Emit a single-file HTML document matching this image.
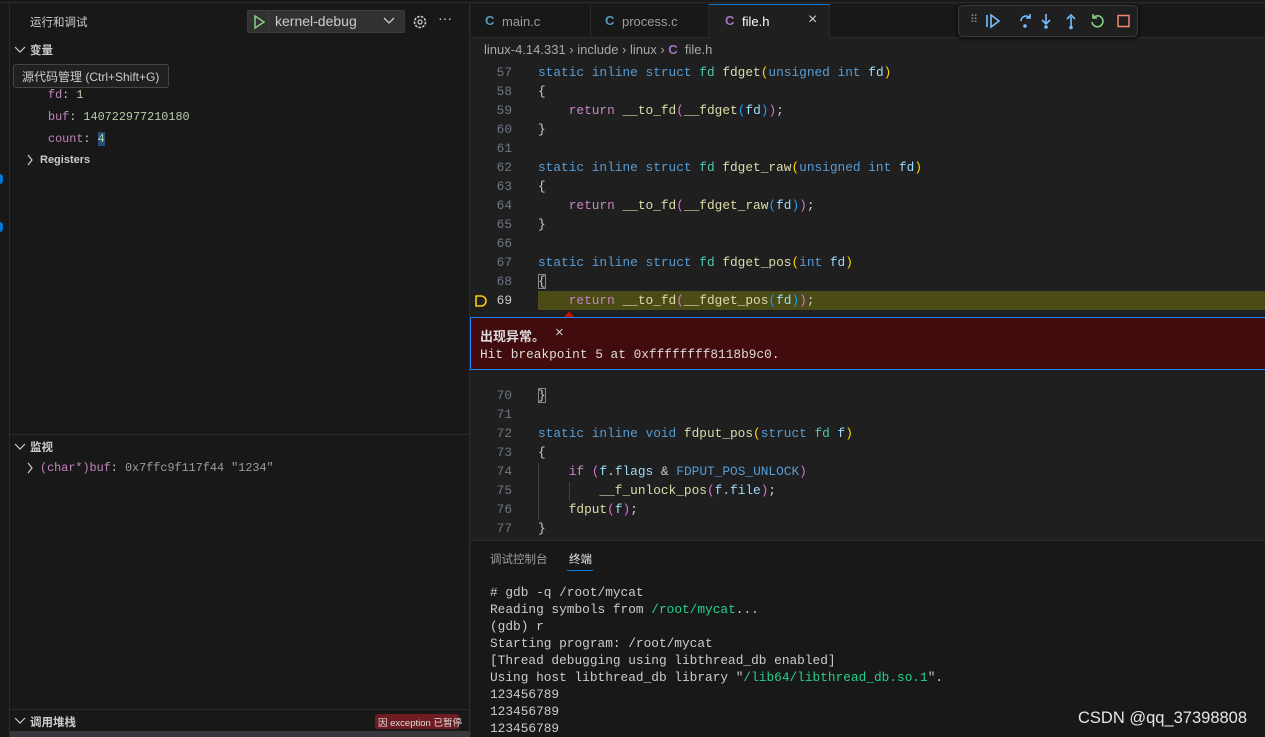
<!DOCTYPE html>
<html><head><meta charset="utf-8"><style>
*{margin:0;padding:0;box-sizing:border-box}
body{width:1265px;height:737px;background:#1f1f1f;overflow:hidden;position:relative;font-family:"Liberation Sans","Noto Sans CJK SC",sans-serif;color:#ccc;font-size:13px}
.a{position:absolute;white-space:pre}
.m{font-family:"Liberation Mono","Noto Sans CJK SC",monospace;font-size:12.8px}
.k{color:#569cd6}.t{color:#4ec9b0}.f{color:#dcdcaa}.r{color:#c586c0}.p{color:#9cdcfe}.y{color:#ffd700}.pk{color:#da70d6}.b{color:#179fff}.w{color:#cccccc}.n{color:#6e7681}
.ln{position:absolute;left:470px;width:42px;text-align:right;color:#6e7681}
.cd{position:absolute;left:538px;color:#ccc}
</style></head><body>
<div class="a" style="left:0;top:0;width:10px;height:737px;background:#181818;border-right:1px solid #2b2b2b"></div>
<div class="a" style="left:-3px;top:174px;width:6px;height:10px;background:#0078d4;border-radius:3px"></div>
<div class="a" style="left:-3px;top:222px;width:6px;height:10px;background:#0078d4;border-radius:3px"></div>
<div class="a" style="left:10px;top:0;width:460px;height:737px;background:#181818;border-right:1px solid #2b2b2b"></div>
<div class="a" style="left:0;top:0;width:1265px;height:3px;background:#181818;border-bottom:1px solid #2b2b2b"></div>
<div class="a" style="left:30px;top:14px;font-size:11.5px;color:#ccc">运行和调试</div>
<div class="a" style="left:247px;top:10px;width:158px;height:23px;background:#313131;border:1px solid #3c3c3c;border-radius:2px"></div>
<div class="a" style="left:268px;top:10px;width:1px;height:23px;background:#3c3c3c"></div>
<svg class="a" style="left:252px;top:14px" width="14" height="16"><path d="M3 2 L12 8 L3 14 Z" fill="none" stroke="#89d185" stroke-width="1.5"/></svg>
<div class="a" style="left:275px;top:13px;font-size:14px;color:#ccc">kernel-debug</div>
<svg class="a" style="left:383px;top:16px" width="12" height="10"><path d="M1 2 L6 7 L11 2" fill="none" stroke="#ccc" stroke-width="1.3"/></svg>
<svg class="a" style="left:412px;top:14px" width="16" height="16"><circle cx="8" cy="8" r="5.5" fill="none" stroke="#ccc" stroke-width="1.6" stroke-dasharray="2.5 1.3"/><circle cx="8" cy="8" r="2" fill="none" stroke="#ccc" stroke-width="1.2"/></svg>
<div class="a" style="left:438px;top:10px;font-size:14px;color:#ccc">···</div>
<svg class="a" style="left:14px;top:45px" width="12" height="10"><path d="M1 2 L6 7 L11 2" fill="none" stroke="#ccc" stroke-width="1.2"/></svg>
<div class="a" style="left:30px;top:42px;font-size:11.5px;font-weight:bold;color:#ccc">变量</div>
<div class="a" style="left:13px;top:64px;width:156px;height:24px;background:#202020;border:1px solid #454545;border-radius:3px;font-size:12px;color:#ccc;padding:3px 8px">源代码管理 (Ctrl+Shift+G)</div>
<div class="a m" style="left:48px;top:88px;font-size:11.8px"><span style="color:#c586c0">fd</span><span class="w">: </span><span style="color:#b5cea8">1</span></div>
<div class="a m" style="left:48px;top:110px;font-size:11.8px"><span style="color:#c586c0">buf</span><span class="w">: </span><span style="color:#b5cea8">140722977210180</span></div>
<div class="a m" style="left:48px;top:132px;font-size:11.8px"><span style="color:#c586c0">count</span><span class="w">: </span><span style="color:#b5cea8;background:#264f78">4</span></div>
<svg class="a" style="left:26px;top:154px" width="8" height="12"><path d="M2 1 L6 6 L2 11" fill="none" stroke="#ccc" stroke-width="1.2"/></svg>
<div class="a" style="left:40px;top:154px;font-size:11px;font-weight:bold;color:#ccc">Registers</div>
<div class="a" style="left:10px;top:434px;width:460px;height:1px;background:#2b2b2b"></div>
<svg class="a" style="left:14px;top:442px" width="12" height="10"><path d="M1 2 L6 7 L11 2" fill="none" stroke="#ccc" stroke-width="1.2"/></svg>
<div class="a" style="left:30px;top:439px;font-size:11.5px;font-weight:bold;color:#ccc">监视</div>
<svg class="a" style="left:26px;top:462px" width="8" height="12"><path d="M2 1 L6 6 L2 11" fill="none" stroke="#ccc" stroke-width="1.2"/></svg>
<div class="a m" style="left:40px;top:461px;font-size:11.8px"><span style="color:#c586c0">(char*)buf</span><span class="w">: </span><span style="color:#9d9d9d">0x7ffc9f117f44 "1234"</span></div>
<div class="a" style="left:10px;top:709px;width:460px;height:1px;background:#2b2b2b"></div>
<svg class="a" style="left:14px;top:716px" width="12" height="10"><path d="M1 2 L6 7 L11 2" fill="none" stroke="#ccc" stroke-width="1.2"/></svg>
<div class="a" style="left:30px;top:714px;font-size:11.5px;font-weight:bold;color:#ccc">调用堆栈</div>
<div class="a" style="left:375px;top:714px;width:84px;height:15px;background:#6e1b22;border-radius:3px;font-size:9.5px;color:#ddd;padding:1px 3px">因 exception 已暂停</div>
<div class="a" style="left:10px;top:731px;width:460px;height:6px;background:#37373d"></div>
<div class="a" style="left:471px;top:4px;width:794px;height:34px;background:#181818;border-bottom:1px solid #2b2b2b"></div>
<div class="a" style="left:471px;top:4px;width:120px;height:34px;border-right:1px solid #2b2b2b"></div>
<div class="a" style="left:485px;top:13px;font-size:13px;color:#519aba;font-weight:bold">C</div>
<div class="a" style="left:502px;top:14px;font-size:13px;color:#9d9d9d">main.c</div>
<div class="a" style="left:591px;top:4px;width:118px;height:34px;border-right:1px solid #2b2b2b"></div>
<div class="a" style="left:605px;top:13px;font-size:13px;color:#519aba;font-weight:bold">C</div>
<div class="a" style="left:622px;top:14px;font-size:13px;color:#9d9d9d">process.c</div>
<div class="a" style="left:709px;top:4px;width:121px;height:35px;background:#1f1f1f;border-top:1px solid #0078d4;border-right:1px solid #2b2b2b"></div>
<div class="a" style="left:725px;top:13px;font-size:13px;color:#a074c4;font-weight:bold">C</div>
<div class="a" style="left:742px;top:14px;font-size:13px;color:#fff">file.h</div>
<div class="a" style="left:808px;top:11px;font-size:16px;color:#ccc">×</div>
<div class="a" style="left:958px;top:5px;width:180px;height:32px;background:#1f1f1f;border:1px solid #3a3a3a;border-radius:5px;box-shadow:0 1px 4px #000"></div>
<div class="a" style="left:970px;top:13px;font-size:11px;color:#888">⠿</div>
<svg class="a" style="left:985px;top:12px" width="150" height="18">
<g fill="none" stroke="#75beff" stroke-width="1.6"><path d="M2 3 V15"/><path d="M6 3 L14 9 L6 15 Z"/>
<path d="M36 9 A5 5 0 0 1 45 6 M45 2 V6 H41"/><path d="M61 2 V11 M57 8 L61 12 L65 8"/><path d="M86 14 V5 M82 7 L86 3 L90 7"/></g>
<g fill="#75beff"><circle cx="40" cy="14" r="1.8"/><circle cx="61" cy="15" r="1.8"/><circle cx="86" cy="15.5" r="1.8"/></g>
<path d="M109 5 A5.5 5.5 0 1 1 107 10 M108 2 V6 H112" fill="none" stroke="#89d185" stroke-width="1.6"/>
<rect x="133" y="3.5" width="11" height="11" fill="none" stroke="#f48771" stroke-width="1.5"/>
</svg>
<div class="a" style="left:484px;top:42px;font-size:13px;color:#a9a9a9">linux-4.14.331 › include › linux › <span style="color:#a074c4;font-weight:bold">C</span>  file.h</div>
<div class="a m" style="left:0;top:1px">
<div class="ln" style="top:64px">57</div><div class="cd" style="top:64px"><span class="k">static inline struct</span> <span class="t">fd</span> <span class="f">fdget</span><span class="y">(</span><span class="k">unsigned int</span> <span class="p">fd</span><span class="y">)</span></div>
<div class="ln" style="top:83px">58</div><div class="cd y" style="top:83px">{</div>
<div class="ln" style="top:102px">59</div><div class="cd" style="top:102px">    <span class="r">return</span> <span class="f">__to_fd</span><span class="pk">(</span><span class="f">__fdget</span><span class="b">(</span><span class="p">fd</span><span class="b">)</span><span class="pk">)</span>;</div>
<div class="ln" style="top:121px">60</div><div class="cd y" style="top:121px">}</div>
<div class="ln" style="top:140px">61</div>
<div class="ln" style="top:159px">62</div><div class="cd" style="top:159px"><span class="k">static inline struct</span> <span class="t">fd</span> <span class="f">fdget_raw</span><span class="y">(</span><span class="k">unsigned int</span> <span class="p">fd</span><span class="y">)</span></div>
<div class="ln" style="top:178px">63</div><div class="cd y" style="top:178px">{</div>
<div class="ln" style="top:197px">64</div><div class="cd" style="top:197px">    <span class="r">return</span> <span class="f">__to_fd</span><span class="pk">(</span><span class="f">__fdget_raw</span><span class="b">(</span><span class="p">fd</span><span class="b">)</span><span class="pk">)</span>;</div>
<div class="ln" style="top:216px">65</div><div class="cd y" style="top:216px">}</div>
<div class="ln" style="top:235px">66</div>
<div class="ln" style="top:254px">67</div><div class="cd" style="top:254px"><span class="k">static inline struct</span> <span class="t">fd</span> <span class="f">fdget_pos</span><span class="y">(</span><span class="k">int</span> <span class="p">fd</span><span class="y">)</span></div>
<div class="ln" style="top:273px">68</div><div class="cd y" style="top:273px;outline:1px solid #888;outline-offset:-1px">{</div>
</div>
<div class="a" style="left:538px;top:291px;width:727px;height:19px;background:#4b4b18"></div>
<svg class="a" style="left:474px;top:294px" width="14" height="14"><path d="M2 2 H7 A5 5 0 0 1 7 12 H2 Z" fill="none" stroke="#ffcc00" stroke-width="1.6"/></svg>
<div class="a m" style="left:0;top:1px">
<div class="ln" style="top:292px;color:#ccc">69</div><div class="cd" style="top:292px">    <span class="r">return</span> <span class="f">__to_fd</span><span class="pk">(</span><span class="f">__fdget_pos</span><span class="b">(</span><span class="p">fd</span><span class="b">)</span><span class="pk">)</span>;</div>
</div>
<div class="a" style="left:564px;top:311px;width:0;height:0;border-left:5px solid transparent;border-right:5px solid transparent;border-bottom:6px solid #be1100"></div>
<div class="a" style="left:470px;top:317px;width:795px;height:53px;background:#420b0d;border:1px solid #1a85ff;border-right:none"></div>
<div class="a" style="left:480px;top:326px;font-size:13px;font-weight:bold;color:#ddd">出现异常。</div>
<div class="a" style="left:555px;top:324px;font-size:15px;color:#ccc">×</div>
<div class="a m" style="left:480px;top:347px;color:#ddd">Hit breakpoint 5 at 0xffffffff8118b9c0.</div>
<div class="a m" style="left:0;top:1px">
<div class="ln" style="top:387px">70</div><div class="cd y" style="top:387px;outline:1px solid #888;outline-offset:-1px">}</div>
<div class="ln" style="top:406px">71</div>
<div class="ln" style="top:425px">72</div><div class="cd" style="top:425px"><span class="k">static inline void</span> <span class="f">fdput_pos</span><span class="y">(</span><span class="k">struct</span> <span class="t">fd</span> <span class="p">f</span><span class="y">)</span></div>
<div class="ln" style="top:444px">73</div><div class="cd y" style="top:444px">{</div>
<div class="ln" style="top:463px">74</div><div class="cd" style="top:463px">    <span class="r">if</span> <span class="pk">(</span><span class="p">f</span>.<span class="p">flags</span> &amp; <span class="k">FDPUT_POS_UNLOCK</span><span class="pk">)</span></div>
<div class="ln" style="top:482px">75</div><div class="cd" style="top:482px">        <span class="f">__f_unlock_pos</span><span class="pk">(</span><span class="p">f</span>.<span class="p">file</span><span class="pk">)</span>;</div>
<div class="ln" style="top:501px">76</div><div class="cd" style="top:501px">    <span class="f">fdput</span><span class="pk">(</span><span class="p">f</span><span class="pk">)</span>;</div>
<div class="ln" style="top:520px">77</div><div class="cd y" style="top:520px">}</div>
</div>
<div class="a" style="left:538px;top:463px;width:1px;height:57px;background:#404040"></div>
<div class="a" style="left:569px;top:482px;width:1px;height:19px;background:#404040"></div>
<div class="a" style="left:471px;top:540px;width:794px;height:197px;background:#181818;border-top:1px solid #2b2b2b"></div>
<div class="a" style="left:490px;top:551px;font-size:11.5px;color:#9d9d9d">调试控制台</div>
<div class="a" style="left:569px;top:551px;font-size:11.5px;color:#e7e7e7">终端</div>
<div class="a" style="left:567px;top:570px;width:26px;height:1px;background:#0078d4"></div>
<div class="a m" style="left:490px;top:584px;line-height:17px;color:#ccc"># gdb -q /root/mycat
Reading symbols from <span style="color:#23d18b">/root/mycat</span>...
(gdb) r
Starting program: /root/mycat
[Thread debugging using libthread_db enabled]
Using host libthread_db library "<span style="color:#23d18b">/lib64/libthread_db.so.1</span>".
123456789
123456789
123456789</div>
<div class="a" style="left:1078px;top:709px;font-size:16.5px;color:#e6e6e6">CSDN @qq_37398808</div>
</body></html>
